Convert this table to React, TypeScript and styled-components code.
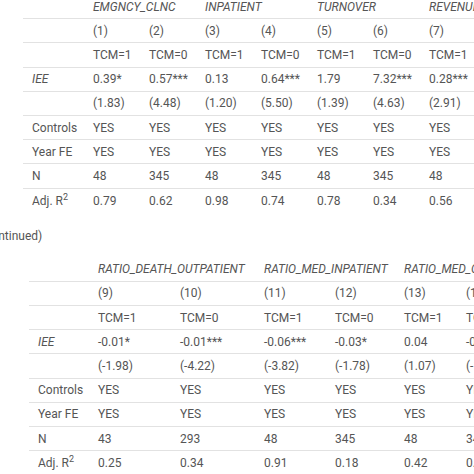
import React from "react";
import styled, { createGlobalStyle } from "styled-components";

const Global = createGlobalStyle`
  html, body {
    margin: 0;
    padding: 0;
    width: 474px;
    height: 474px;
    overflow: hidden;
    background: #ffffff;
  }
  body {
    font-family: Roboto, "Liberation Sans", Arial, sans-serif;
    font-size: 12px;
    color: #555555;
  }
`;

const Page = styled.div`
  width: 474px;
  height: 474px;
  overflow: hidden;
  display: flex;
  flex-direction: column;
`;

const Table = styled.div<{ $left: number; $top: number }>`
  display: flex;
  flex-direction: column;
  margin-left: ${(p) => p.$left}px;
  margin-top: ${(p) => p.$top}px;
  width: max-content;
`;

const Row = styled.div<{ $last?: boolean }>`
  display: flex;
  flex: none;
  height: 24.2px;
  box-sizing: border-box;
  align-items: center;
  border-bottom: ${(p) => (p.$last ? "none" : "1px solid #e2e2e2")};
  white-space: nowrap;
`;

const Label = styled.div<{ $w: number; $italic?: boolean }>`
  flex: none;
  width: ${(p) => p.$w}px;
  box-sizing: border-box;
  padding-left: 9px;
  font-style: ${(p) => (p.$italic ? "italic" : "normal")};
`;

const Cell = styled.div<{ $w: number; $italic?: boolean }>`
  flex: none;
  width: ${(p) => p.$w}px;
  font-style: ${(p) => (p.$italic ? "italic" : "normal")};
  overflow: visible;
`;

const Continued = styled.div`
  margin: 13px 0 11px -19px;
  height: 21px;
  line-height: 21px;
  white-space: nowrap;
`;

type TableSpec = {
  left: number;
  top: number;
  labelW: number;
  widths: number[];
  headers: { text: string; span: number }[];
  rows: { label: React.ReactNode; italic?: boolean; values: string[] }[];
};

const Sup = styled.sup`
  font-size: 9px;
  vertical-align: 5px;
  line-height: 0;
`;

const adj = (
  <>
    Adj. R<Sup>2</Sup>
  </>
);

const table1: TableSpec = {
  left: 23,
  top: -5,
  labelW: 70,
  widths: [56, 56, 56, 56, 56, 56, 56, 56],
  headers: [
    { text: "EMGNCY_CLNC", span: 2 },
    { text: "INPATIENT", span: 2 },
    { text: "TURNOVER", span: 2 },
    { text: "REVENUE", span: 2 },
  ],
  rows: [
    { label: "", values: ["(1)", "(2)", "(3)", "(4)", "(5)", "(6)", "(7)", "(8)"] },
    { label: "", values: ["TCM=1", "TCM=0", "TCM=1", "TCM=0", "TCM=1", "TCM=0", "TCM=1", "TCM=0"] },
    { label: "IEE", italic: true, values: ["0.39*", "0.57***", "0.13", "0.64***", "1.79", "7.32***", "0.28***", "0.41***"] },
    { label: "", values: ["(1.83)", "(4.48)", "(1.20)", "(5.50)", "(1.39)", "(4.63)", "(2.91)", "(6.02)"] },
    { label: "Controls", values: ["YES", "YES", "YES", "YES", "YES", "YES", "YES", "YES"] },
    { label: "Year FE", values: ["YES", "YES", "YES", "YES", "YES", "YES", "YES", "YES"] },
    { label: "N", values: ["48", "345", "48", "345", "48", "345", "48", "345"] },
    { label: adj, values: ["0.79", "0.62", "0.98", "0.74", "0.78", "0.34", "0.56", "0.71"] },
  ],
};

const table2: TableSpec = {
  left: 29,
  top: 0,
  labelW: 69,
  widths: [82, 84, 71, 69, 62, 62],
  headers: [
    { text: "RATIO_DEATH_OUTPATIENT", span: 2 },
    { text: "RATIO_MED_INPATIENT", span: 2 },
    { text: "RATIO_MED_OUTPATIENT", span: 2 },
  ],
  rows: [
    { label: "", values: ["(9)", "(10)", "(11)", "(12)", "(13)", "(14)"] },
    { label: "", values: ["TCM=1", "TCM=0", "TCM=1", "TCM=0", "TCM=1", "TCM=0"] },
    { label: "IEE", italic: true, values: ["-0.01*", "-0.01***", "-0.06***", "-0.03*", "0.04", "-0.02"] },
    { label: "", values: ["(-1.98)", "(-4.22)", "(-3.82)", "(-1.78)", "(1.07)", "(-1.25)"] },
    { label: "Controls", values: ["YES", "YES", "YES", "YES", "YES", "YES"] },
    { label: "Year FE", values: ["YES", "YES", "YES", "YES", "YES", "YES"] },
    { label: "N", values: ["43", "293", "48", "345", "48", "345"] },
    { label: adj, values: ["0.25", "0.34", "0.91", "0.18", "0.42", "0.31"] },
  ],
};

function RegTable({ spec }: { spec: TableSpec }) {
  let idx = 0;
  const headerCells = spec.headers.map((h) => {
    const w = spec.widths.slice(idx, idx + h.span).reduce((a, b) => a + b, 0);
    idx += h.span;
    return (
      <Cell key={h.text} $w={w} $italic>
        {h.text}
      </Cell>
    );
  });
  return (
    <Table $left={spec.left} $top={spec.top}>
      <Row>
        <Label $w={spec.labelW} />
        {headerCells}
      </Row>
      {spec.rows.map((r, i) => (
        <Row key={i} $last={i === spec.rows.length - 1}>
          <Label $w={spec.labelW} $italic={r.italic}>
            {r.label}
          </Label>
          {r.values.map((v, j) => (
            <Cell key={j} $w={spec.widths[j]}>
              {v}
            </Cell>
          ))}
        </Row>
      ))}
    </Table>
  );
}

export default function App() {
  return (
    <Page>
      <Global />
      <RegTable spec={table1} />
      <Continued>(continued)</Continued>
      <RegTable spec={table2} />
    </Page>
  );
}
